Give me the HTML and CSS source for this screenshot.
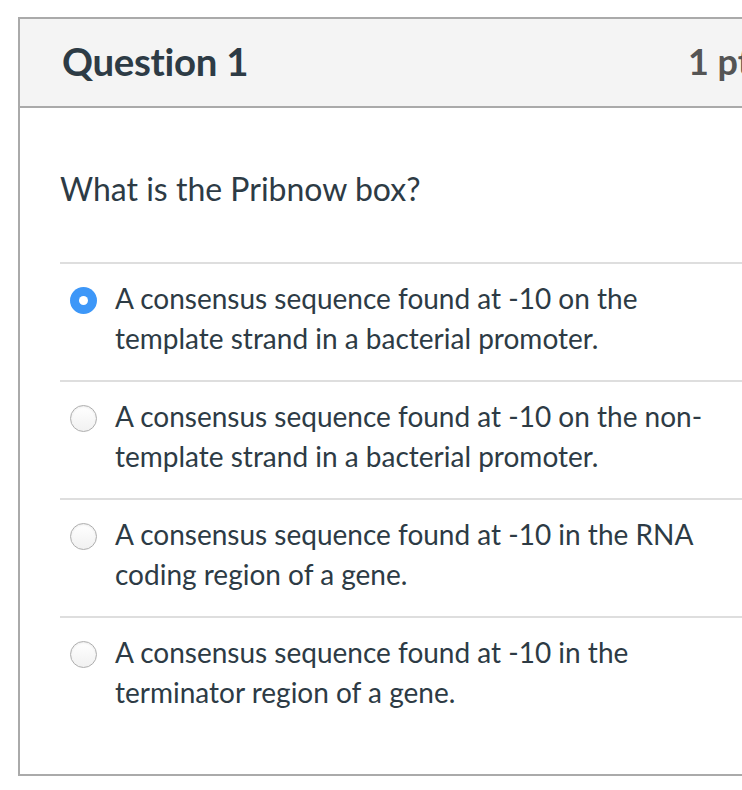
FILE: index.html
```html
<!DOCTYPE html>
<html lang="en">
<head>
<meta charset="utf-8">
<title>Question 1</title>
<link rel="stylesheet" href="styles.css">
</head>
<body>
<div class="card">
  <div class="card-header">
    <h2 class="title">Question 1</h2>
    <span class="points">1 pts</span>
  </div>
  <div class="card-body">
    <p class="question">What is the Pribnow box?</p>
    <ul class="answers">
      <li class="answer">
        <span class="radio radio-checked"></span>
        <span class="answer-text">A consensus sequence found at -10 on the template strand in a bacterial promoter.</span>
      </li>
      <li class="answer">
        <span class="radio"></span>
        <span class="answer-text">A consensus sequence found at -10 on the non-template strand in a bacterial promoter.</span>
      </li>
      <li class="answer">
        <span class="radio"></span>
        <span class="answer-text">A consensus sequence found at -10 in the RNA coding region of a gene.</span>
      </li>
      <li class="answer">
        <span class="radio"></span>
        <span class="answer-text">A consensus sequence found at -10 in the terminator region of a gene.</span>
      </li>
    </ul>
  </div>
</div>
</body>
</html>
```
FILE: styles.css
```css
html, body {
  margin: 0;
  padding: 0;
  background: #ffffff;
  overflow: hidden;
}
body {
  font-family: Lato, "Liberation Sans", sans-serif;
  color: #2d3b45;
  width: 742px;
  height: 790px;
}
.card {
  margin: 17px 0 0 18px;
  width: 780px;
  border: 2px solid #aaaaaa;
  box-sizing: border-box;
}
.card-header {
  background: #f4f4f4;
  border-bottom: 2px solid #aaaaaa;
  height: 87px;
  display: flex;
  align-items: center;
  justify-content: space-between;
  padding: 0 0 0 42px;
  box-sizing: content-box;
}
.title {
  margin: 0 0 3px 0;
  font-size: 38.4px;
  font-weight: 700;
  color: #2d3b45;
  letter-spacing: -0.3px;
}
.points {
  font-size: 36px;
  font-weight: 700;
  color: #555555;
  margin: 0 29px 3px 0;
}
.card-body {
  padding: 0 0 0 40px;
  height: 666px;
  box-sizing: border-box;
}
.question {
  margin: 0;
  padding-top: 61px;
  height: 93px;
  font-size: 32px;
  line-height: 40px;
  border-bottom: 2px solid #dedede;
}
.answers {
  list-style: none;
  margin: 0;
  padding: 0;
}
.answer {
  display: flex;
  align-items: flex-start;
  border-bottom: 2px solid #dedede;
  padding: 14px 0 20px 10px;
  height: 82px;
}
.answer:last-child {
  border-bottom: none;
}
.answer-text {
  font-size: 28px;
  line-height: 40px;
  width: 600px;
}
.radio {
  flex: none;
  width: 27px;
  height: 27px;
  border-radius: 50%;
  box-sizing: border-box;
  margin: 9px 18px 0 0;
  border: 1px solid #aeaeae;
  background: linear-gradient(#ffffff, #f1f1f1);
  box-shadow: inset 0 1px 2px rgba(0,0,0,0.08);
}
.radio-checked {
  border: none;
  background: #3d97f8;
  box-shadow: none;
  display: flex;
  align-items: center;
  justify-content: center;
}
.radio-checked::after {
  content: "";
  width: 9px;
  height: 9px;
  border-radius: 50%;
  background: #ffffff;
}
```
